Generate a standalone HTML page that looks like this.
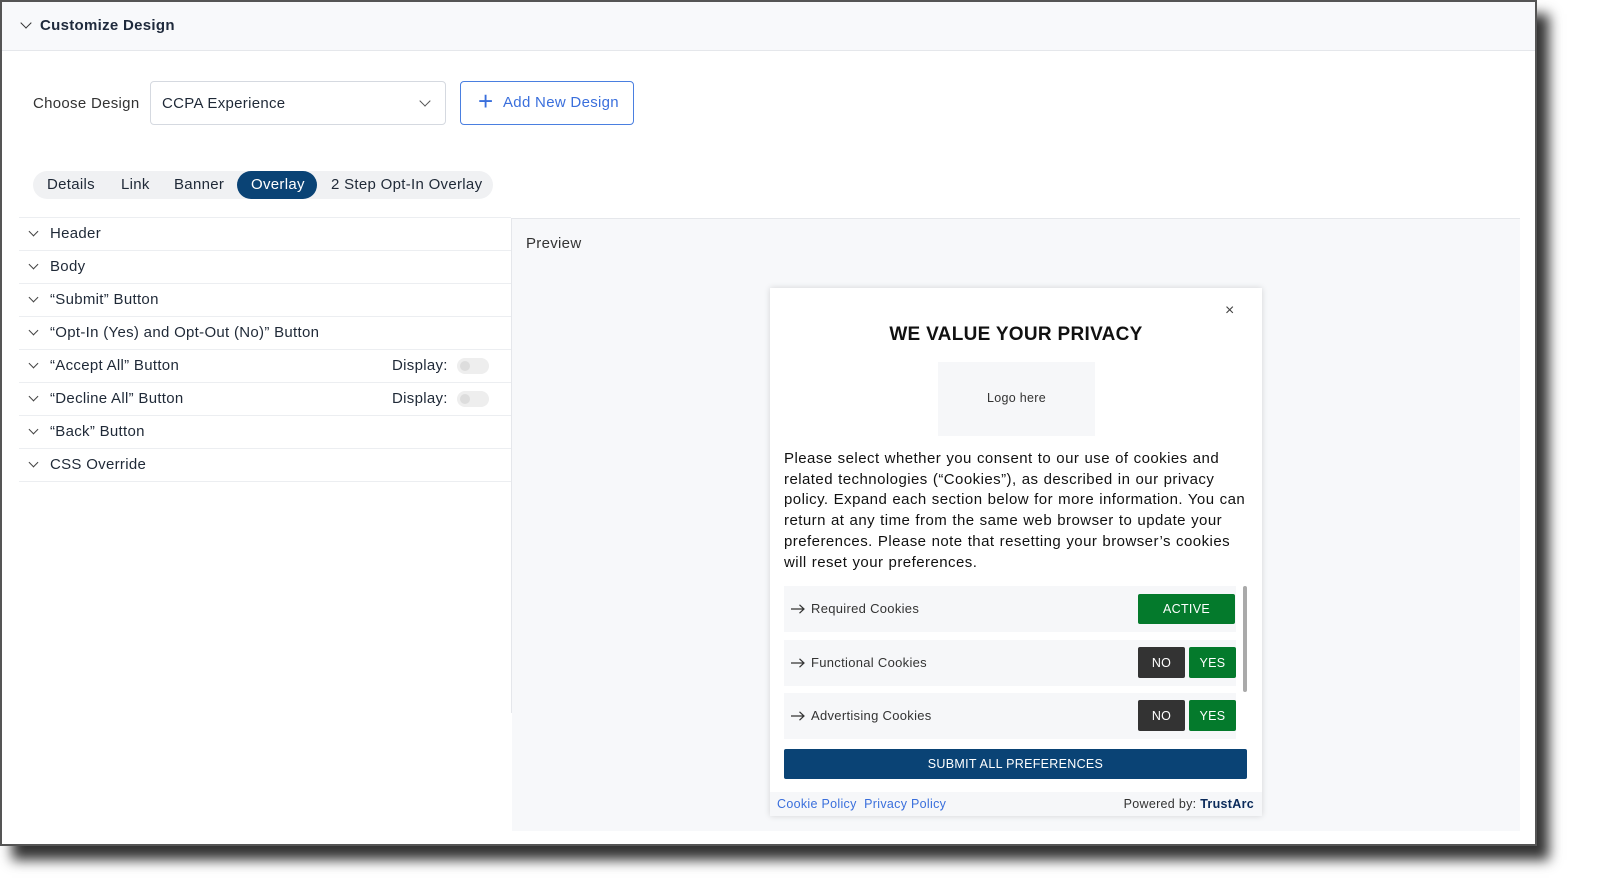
<!DOCTYPE html>
<html><head><meta charset="utf-8"><style>
*{box-sizing:border-box;margin:0;padding:0}
body{width:1600px;height:894px;background:#fff;font-family:"Liberation Sans",sans-serif;color:#1f2937;position:relative;overflow:hidden;letter-spacing:.3px}
.frame{position:absolute;left:0;top:0;width:1537px;height:846px;background:#fff;border:2px solid #555;box-shadow:12px 14px 12px rgba(0,0,0,.8)}
.hdr{position:absolute;left:0;top:0;right:0;height:49px;background:#f8f9fb;border-bottom:1px solid #e5e7eb}
.hdr span{position:absolute;left:38px;top:15px;font-weight:bold;font-size:15px;color:#1f2a3c}
.chev{position:absolute;width:8px;height:8px;border-right:1.5px solid #333;border-bottom:1.5px solid #333;transform:rotate(45deg)}
.a{position:absolute}
.sel{left:148px;top:79px;width:296px;height:44px;border:1px solid #d5d9e0;border-radius:4px;font-size:15px;padding:13px 11px}
.add{left:458px;top:79px;width:174px;height:44px;border:1px solid #4a7fe0;border-radius:4px;color:#3a6fdc;font-size:15px;padding:12px 0 0 42px}
.tabs{left:31px;top:169px;width:460px;height:28px;background:#f0f1f3;border-radius:14px;font-size:15px}
.tabs span{position:absolute;top:5px}
.row{position:absolute;left:17px;width:492px;height:33px;border-bottom:1px solid #eceef1;font-size:15px}
.row .t{position:absolute;left:31px;top:7px}
.row .chev{left:11px;top:10px;width:7px;height:7px;border-color:#444;border-width:1.3px}
.disp{position:absolute;left:373px;top:7px}
.tg{position:absolute;left:438px;top:8px;width:32px;height:16px;border-radius:8px;background:#eee}
.tg:after{content:"";position:absolute;left:3px;top:3px;width:10px;height:10px;border-radius:5px;background:#ddd}
.prev{left:510px;top:216px;width:1008px;height:613px;background:#f7f8fa;border-top:1px solid #e5e7eb}
.modal{left:768px;top:286px;width:492px;height:528px;background:#fff;box-shadow:0 0 6px rgba(0,0,0,.15)}
.ck{position:absolute;left:14px;width:452px;height:46px;background:#f6f7f9;font-size:13px}
.ck .l{position:absolute;left:27px;top:15px;color:#333}
.ck svg{position:absolute;left:7px;top:18px}
.b{position:absolute;color:#fff;font-size:12.5px;text-align:center;border-radius:2px}
.g{background:#047a2c}.k{background:#333}
</style></head><body>
<div class="frame">
<div class="hdr"><div class="chev" style="left:20px;top:17px"></div><span>Customize Design</span></div>
<div class="a" style="left:31px;top:93px;font-size:15px;color:#333">Choose Design</div>
<div class="a sel">CCPA Experience<div class="chev" style="left:270px;top:15px;width:8px;height:8px;border-color:#555;border-width:1.2px"></div></div>
<div class="a add"><span style="position:absolute;left:17px;top:6px;font-size:26px;font-weight:200;line-height:26px">+</span>Add New Design</div>
<div class="a tabs">
<span style="left:14px">Details</span><span style="left:88px">Link</span><span style="left:141px">Banner</span>
<div style="position:absolute;left:204px;top:0;width:80px;height:28px;background:#0a4375;border-radius:14px;color:#fff;padding:5px 0 0 14px">Overlay</div>
<span style="left:298px">2 Step Opt-In Overlay</span></div>
<div class="a" style="left:17px;top:215px;width:492px;border-top:1px solid #eceef1"></div>
<div class="row" style="top:216px"><div class="chev"></div><span class="t">Header</span></div>
<div class="row" style="top:249px"><div class="chev"></div><span class="t">Body</span></div>
<div class="row" style="top:282px"><div class="chev"></div><span class="t">“Submit” Button</span></div>
<div class="row" style="top:315px"><div class="chev"></div><span class="t">“Opt-In (Yes) and Opt-Out (No)” Button</span></div>
<div class="row" style="top:348px"><div class="chev"></div><span class="t">“Accept All” Button</span><span class="disp">Display:</span><div class="tg"></div></div>
<div class="row" style="top:381px"><div class="chev"></div><span class="t">“Decline All” Button</span><span class="disp">Display:</span><div class="tg"></div></div>
<div class="row" style="top:414px"><div class="chev"></div><span class="t">“Back” Button</span></div>
<div class="row" style="top:447px"><div class="chev"></div><span class="t">CSS Override</span></div>
<div class="a" style="left:509px;top:216px;width:1px;height:495px;background:#e5e7eb"></div>
<div class="a prev"><div style="position:absolute;left:14px;top:16px;font-size:15px;color:#333">Preview</div></div>
<div class="a modal">
<div style="position:absolute;left:455px;top:14px;font-size:16px;color:#444">×</div>
<div style="position:absolute;left:0;width:100%;top:36px;text-align:center;font-weight:bold;font-size:19px;color:#111">WE VALUE YOUR PRIVACY</div>
<div style="position:absolute;left:168px;top:74px;width:157px;height:74px;background:#f6f7f9;font-size:12.5px;text-align:center;padding-top:29px;color:#333">Logo here</div>
<div style="position:absolute;left:14px;top:161px;width:462px;font-size:15px;line-height:20.7px;color:#111;letter-spacing:.45px;word-spacing:.5px">Please select whether you consent to our use of cookies and related technologies (“Cookies”), as described in our privacy policy. Expand each section below for more information. You can return at any time from the same web browser to update your preferences. Please note that resetting your browser’s cookies will reset your preferences.</div>
<div class="ck" style="top:298px"><svg width="14" height="10" viewBox="0 0 14 10"><path d="M0 5H13M8.5 0.8L13 5L8.5 9.2" fill="none" stroke="#333" stroke-width="1.2"/></svg><span class="l">Required Cookies</span><div class="b g" style="left:354px;top:8px;width:97px;height:30px;padding-top:8px">ACTIVE</div></div>
<div class="ck" style="top:352px"><svg width="14" height="10" viewBox="0 0 14 10"><path d="M0 5H13M8.5 0.8L13 5L8.5 9.2" fill="none" stroke="#333" stroke-width="1.2"/></svg><span class="l">Functional Cookies</span><div class="b k" style="left:354px;top:7px;width:47px;height:31px;padding-top:9px">NO</div><div class="b g" style="left:405px;top:7px;width:47px;height:31px;padding-top:9px">YES</div></div>
<div class="ck" style="top:405px"><svg width="14" height="10" viewBox="0 0 14 10"><path d="M0 5H13M8.5 0.8L13 5L8.5 9.2" fill="none" stroke="#333" stroke-width="1.2"/></svg><span class="l">Advertising Cookies</span><div class="b k" style="left:354px;top:7px;width:47px;height:31px;padding-top:9px">NO</div><div class="b g" style="left:405px;top:7px;width:47px;height:31px;padding-top:9px">YES</div></div>
<div style="position:absolute;left:473px;top:298px;width:4px;height:106px;background:#aaa;border-radius:2px"></div>
<div class="b" style="left:14px;top:461px;width:463px;height:30px;background:#0a4375;padding-top:8px">SUBMIT ALL PREFERENCES</div>
<div style="position:absolute;left:0;top:504px;width:492px;height:24px;background:#f6f7f9;font-size:12.5px">
<span style="position:absolute;left:7px;top:5px;color:#3a6fdc">Cookie Policy&nbsp; Privacy Policy</span>
<span style="position:absolute;right:8px;top:5px;color:#333">Powered by: <b style="color:#0a2a5a;font-weight:600">TrustArc</b></span></div>
</div>
</div>
</body></html>
